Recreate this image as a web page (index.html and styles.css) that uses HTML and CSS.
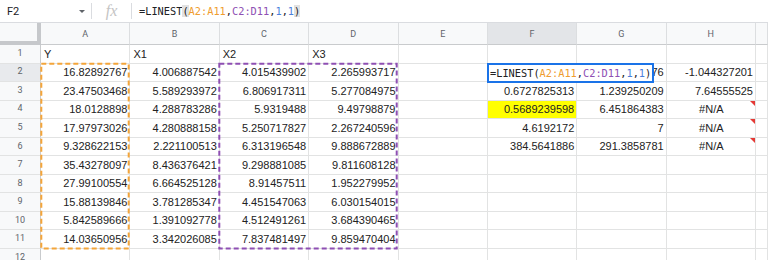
FILE: index.html
```html
<!DOCTYPE html>
<html lang="en">
<head>
  <meta charset="UTF-8" />
  <title>LINEST</title>
  <link rel="stylesheet" href="styles.css">
</head>
<body>

  <div class="formula-bar">
    <div class="name-box"><span>F2</span><span class="caret"></span></div>
    <div class="sep"></div>
    <div class="fx">fx</div>
    <div class="sep"></div>
    <div class="formula">=LINEST<span class="paren">(</span><span class="ref-a">A2:A11</span>,<span class="ref-c">C2:D11</span>,<span class="arg">1</span>,<span class="arg">1</span><span class="paren">)</span></div>
  </div>

  <div class="sheet">
    <!-- column headers -->
    <div class="corner"></div>
    <div class="ch">A</div>
    <div class="ch">B</div>
    <div class="ch">C</div>
    <div class="ch">D</div>
    <div class="ch">E</div>
    <div class="ch sel">F</div>
    <div class="ch">G</div>
    <div class="ch">H</div>
    <div class="ch"></div>

    <!-- row 1 -->
    <div class="rh">1</div>
    <div class="c">Y</div><div class="c">X1</div><div class="c">X2</div><div class="c">X3</div>
    <div class="c"></div><div class="c"></div><div class="c"></div><div class="c"></div><div class="c"></div>

    <!-- row 2 (G2 mostly hidden under the editor) -->
    <div class="rh sel">2</div>
    <div class="c n">16.82892767</div><div class="c n">4.006887542</div><div class="c n">4.015439902</div><div class="c n">2.265993717</div>
    <div class="c"></div><div class="c"></div><div class="c n">76</div><div class="c n">-1.044327201</div><div class="c"></div>

    <!-- row 3 -->
    <div class="rh">3</div>
    <div class="c n">23.47503468</div><div class="c n">5.589293972</div><div class="c n">6.806917311</div><div class="c n">5.277084975</div>
    <div class="c"></div><div class="c n">0.6727825313</div><div class="c n">1.239250209</div><div class="c n">7.64555525</div><div class="c"></div>

    <!-- row 4 -->
    <div class="rh">4</div>
    <div class="c n">18.0128898</div><div class="c n">4.288783286</div><div class="c n">5.9319488</div><div class="c n">9.49798879</div>
    <div class="c"></div><div class="c n hl">0.5689239598</div><div class="c n">6.451864383</div><div class="c m note">#N/A</div><div class="c"></div>

    <!-- row 5 -->
    <div class="rh">5</div>
    <div class="c n">17.97973026</div><div class="c n">4.280888158</div><div class="c n">5.250717827</div><div class="c n">2.267240596</div>
    <div class="c"></div><div class="c n">4.6192172</div><div class="c n">7</div><div class="c m note">#N/A</div><div class="c"></div>

    <!-- row 6 -->
    <div class="rh">6</div>
    <div class="c n">9.328622153</div><div class="c n">2.221100513</div><div class="c n">6.313196548</div><div class="c n">9.888672889</div>
    <div class="c"></div><div class="c n">384.5641886</div><div class="c n">291.3858781</div><div class="c m note">#N/A</div><div class="c"></div>

    <!-- row 7 -->
    <div class="rh">7</div>
    <div class="c n">35.43278097</div><div class="c n">8.436376421</div><div class="c n">9.298881085</div><div class="c n">9.811608128</div>
    <div class="c"></div><div class="c"></div><div class="c"></div><div class="c"></div><div class="c"></div>

    <!-- row 8 -->
    <div class="rh">8</div>
    <div class="c n">27.99100554</div><div class="c n">6.664525128</div><div class="c n">8.91457511</div><div class="c n">1.952279952</div>
    <div class="c"></div><div class="c"></div><div class="c"></div><div class="c"></div><div class="c"></div>

    <!-- row 9 -->
    <div class="rh">9</div>
    <div class="c n">15.88139846</div><div class="c n">3.781285347</div><div class="c n">4.451547063</div><div class="c n">6.030154015</div>
    <div class="c"></div><div class="c"></div><div class="c"></div><div class="c"></div><div class="c"></div>

    <!-- row 10 -->
    <div class="rh">10</div>
    <div class="c n">5.842589666</div><div class="c n">1.391092778</div><div class="c n">4.512491261</div><div class="c n">3.684390465</div>
    <div class="c"></div><div class="c"></div><div class="c"></div><div class="c"></div><div class="c"></div>

    <!-- row 11 -->
    <div class="rh">11</div>
    <div class="c n">14.03650956</div><div class="c n">3.342026085</div><div class="c n">7.837481497</div><div class="c n">9.859470404</div>
    <div class="c"></div><div class="c"></div><div class="c"></div><div class="c"></div><div class="c"></div>

    <!-- row 12 -->
    <div class="rh">12</div>
    <div class="c"></div><div class="c"></div><div class="c"></div><div class="c"></div>
    <div class="c"></div><div class="c"></div><div class="c"></div><div class="c"></div><div class="c"></div>

    <!-- referenced ranges -->
    <svg class="ranges" width="768" height="237" viewBox="0 0 768 237">
      <rect x="41.3" y="40.8" width="87.4" height="184.6" fill="none" stroke="#f4a53a" stroke-width="2" stroke-dasharray="5 3" />
      <rect x="219.3" y="40.8" width="177.4" height="184.6" fill="none" stroke="#8e4fb3" stroke-width="2" stroke-dasharray="5 3" />
    </svg>

    <!-- in-cell editor -->
    <div class="editor">=LINEST(<span class="ref-a">A2:A11</span>,<span class="ref-c">C2:D11</span>,<span class="arg">1</span>,<span class="arg">1</span>)</div>
  </div>

</body>
</html>
```

FILE: styles.css
```css
:root {
  --grid: #e2e3e3;
  --head-bg: #f8f9fa;
  --head-line: #c9cbcd;
  --head-text: #60646a;
  --text: #222;
  --orange: #ef9d2f;
  --purple: #8e4fb3;
  --blue: #4a7fdc;
  --mono: "DejaVu Sans Mono", "Liberation Mono", monospace;
}
* {
  box-sizing: border-box;
}
body {
  margin: 0;
  width: 768px;
  height: 260px;
  overflow: hidden;
  background: #fff;
  font-family: "Liberation Sans", Arial, sans-serif;
  color: var(--text);
}

/* formula bar */
.formula-bar {
  display: flex;
  align-items: center;
  height: 23px;
  border-bottom: 1px solid #dadce0;
}
.name-box {
  display: flex;
  align-items: center;
  justify-content: space-between;
  width: 91px;
  padding: 0 6px 0 7px;
  font-family: Roboto, sans-serif;
  font-size: 11px;
  color: #202124;
}
.caret {
  width: 0;
  height: 0;
  border-left: 3px solid transparent;
  border-right: 3px solid transparent;
  border-top: 3px solid #5f6368;
}
.sep {
  width: 1px;
  height: 16px;
  background: #dadce0;
}
.fx {
  width: 39px;
  text-align: center;
  font-family: "Liberation Serif", serif;
  font-style: italic;
  font-size: 16px;
  color: #c4c4c4;
}
.formula {
  padding-left: 7px;
  font-family: var(--mono);
  font-size: 10.3px;
  color: #202124;
  white-space: nowrap;
}
.paren {
  background: #e2e2e2;
}
.ref-a {
  color: var(--orange);
}
.ref-c {
  color: var(--purple);
}
.arg {
  color: var(--blue);
}

/* grid */
.sheet {
  position: relative;
  display: grid;
  grid-template-columns: 41px repeat(8, 89.375px) 1fr;
  grid-template-rows: 22px;
  grid-auto-rows: 18.55px;
}
.corner {
  background: var(--head-bg);
  border-right: 4px solid #c6c8cb;
  border-bottom: 4px solid #c6c8cb;
}
.ch {
  display: flex;
  align-items: center;
  justify-content: center;
  background: var(--head-bg);
  border-right: 1px solid #dcdee0;
  border-bottom: 1px solid var(--head-line);
  font-family: Roboto, sans-serif;
  font-size: 9px;
  color: var(--head-text);
}
.rh {
  display: flex;
  align-items: center;
  justify-content: center;
  padding-bottom: 2px;
  background: var(--head-bg);
  border-right: 1px solid var(--head-line);
  border-bottom: 1px solid var(--grid);
  font-family: Roboto, sans-serif;
  font-size: 9px;
  color: var(--head-text);
}
.ch.sel {
  background: #e3e5e8;
}
.rh.sel {
  background: #e8eaed;
}
.c {
  display: flex;
  align-items: flex-end;
  padding: 0 2px 2px 3px;
  border-right: 1px solid var(--grid);
  border-bottom: 1px solid var(--grid);
  font-size: 11px;
  line-height: 13px;
  white-space: nowrap;
  overflow: hidden;
}
.c.n {
  justify-content: flex-end;
}
.c.m {
  justify-content: center;
}
.c.hl {
  background: #ffff00;
}
.c.note {
  position: relative;
}
.c.note::after {
  content: "";
  position: absolute;
  top: 0;
  right: 0;
  border-top: 5px solid #e53935;
  border-left: 5px solid transparent;
}

/* overlays */
.ranges {
  position: absolute;
  top: 0;
  left: 0;
  pointer-events: none;
}
.editor {
  position: absolute;
  left: 487px;
  top: 40px;
  width: 167px;
  height: 20px;
  padding-left: 1px;
  border: 2px solid #1a73e8;
  background: #fff;
  font-family: var(--mono);
  font-size: 10.3px;
  line-height: 16px;
  white-space: nowrap;
  overflow: hidden;
}
```
